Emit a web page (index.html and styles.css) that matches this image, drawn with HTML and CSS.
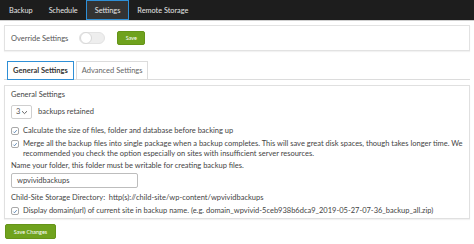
FILE: index.html
```html
<!DOCTYPE html>
<html>
<head>
<meta charset="utf-8">
<link rel="stylesheet" href="styles.css">
</head>
<body>
<nav class="topnav">
  <span class="nav-item">Backup</span>
  <span class="nav-item">Schedule</span>
  <span class="nav-item active">Settings</span>
  <span class="nav-item">Remote Storage</span>
</nav>
<div class="override">
  <span class="label">Override Settings</span>
  <span class="toggle"><span class="knob"></span></span>
  <button class="btn small">Save</button>
</div>
<div class="tabs">
  <span class="tab active">General Settings</span>
  <span class="tab">Advanced Settings</span>
</div>
<div class="panel">
  <div class="heading">General Settings</div>
  <div class="row retain">
    <span class="select">3 <svg width="7" height="5" viewBox="0 0 7 5"><path d="M1 1.2 L3.5 3.6 L6 1.2" fill="none" stroke="#555" stroke-width="0.9"/></svg></span>
    <span>backups retained</span>
  </div>
  <div class="row check"><span class="cb"><svg viewBox="0 0 8 8" width="8" height="8"><path d="M1.8 4.2 L3.3 5.7 L6.3 2.2" fill="none" stroke="#3a6ea5" stroke-width="1"/></svg></span><span>Calculate the size of files, folder and database before backing up</span></div>
  <div class="row check multi"><span class="cb"><svg viewBox="0 0 8 8" width="8" height="8"><path d="M1.8 4.2 L3.3 5.7 L6.3 2.2" fill="none" stroke="#3a6ea5" stroke-width="1"/></svg></span><span>Merge all the backup files into single package when a backup completes. This will save great disk spaces, though takes longer time. We recommended you check the option especially on sites with insufficient server resources.</span></div>
  <div class="row name">Name your folder, this folder must be writable for creating backup files.</div>
  <div class="input">wpvividbackups</div>
  <div class="row">Child-Site Storage Directory:&nbsp; http(s)://child-site/wp-content/wpvividbackups</div>
  <div class="row check last"><span class="cb"><svg viewBox="0 0 8 8" width="8" height="8"><path d="M1.8 4.2 L3.3 5.7 L6.3 2.2" fill="none" stroke="#3a6ea5" stroke-width="1"/></svg></span><span>Display domain(url) of current site in backup name. (e.g. domain_wpvivid-5ceb938b6dca9_2019-05-27-07-36_backup_all.zip)</span></div>
</div>
<button class="btn big">Save Changes</button>
</body>
</html>
```

FILE: styles.css
```css
html, body {
  margin: 0;
  padding: 0;
  background: #ffffff;
  width: 474px;
  height: 244px;
  overflow: hidden;
  font-family: Lato, "Open Sans", sans-serif;
  color: #3c3c3c;
  font-size: 7.5px;
}
.topnav {
  display: flex;
  align-items: stretch;
  background: #1d1d1d;
  height: 20px;
  padding-left: 1px;
  border-bottom: 1px solid #cfcfcf;
}
.nav-item {
  display: flex;
  align-items: center;
  padding: 0 8px;
  color: #e6e6e6;
  font-size: 7.3px;
}
.nav-item.active {
  background: #333;
  border: 1.5px solid #2e8fd6;
  box-sizing: border-box;
  padding: 0 8px;
}
.override {
  margin: 4px 4px 0 4px;
  height: 24px;
  border: 1px solid #e2e2e2;
  box-shadow: 0 1px 1px rgba(0,0,0,0.05);
  display: flex;
  align-items: center;
  padding-left: 6px;
}
.label { color: #555; font-size: 7.5px; }
.toggle {
  margin-left: 11px;
  width: 24px;
  height: 10px;
  border-radius: 6px;
  background: #eeeeee;
  border: 1px solid #e3e3e3;
  position: relative;
}
.knob {
  position: absolute;
  left: 0;
  top: -1px;
  width: 10px;
  height: 10px;
  border-radius: 50%;
  background: #fff;
  border: 1px solid #d8d8d8;
}
.btn {
  background: #6fa21d;
  border: 1px solid #659418;
  color: #fff;
  font-family: Lato, sans-serif;
  border-radius: 2px;
  padding: 0;
}
.btn.small {
  margin-left: 12px;
  width: 28px;
  height: 14px;
  font-size: 5.5px;
}
.tabs {
  display: flex;
  align-items: flex-end;
  margin: 9px 4px 0 4px;
  padding-left: 3px;
  border-bottom: 1px solid #dcdcdc;
  height: 19px;
}
.tab {
  display: flex;
  align-items: center;
  height: 17px;
  padding: 0 5px;
  border: 1px solid #dcdcdc;
  border-bottom: none;
  color: #666;
  margin-right: 2px;
  font-size: 7.5px;
}
.tab.active {
  height: 19px;
  border: 1.5px solid #2e8fd6;
  color: #333;
  font-weight: bold;
  padding: 0 5px;
  box-sizing: border-box;
  margin-bottom: -1px;
}
.panel {
  margin: 5px 4px 0 4px;
  border: 1px solid #e0e0e0;
  box-shadow: 0 1px 1px rgba(0,0,0,0.05);
  padding: 4px 6px 5px 6px;
  height: 134px;
  box-sizing: border-box;
}
.heading {
  color: #444;
  font-size: 7.5px;
  margin-bottom: 6px;
}
.row {
  display: flex;
  align-items: flex-start;
  line-height: 10px;
  margin-bottom: 3px;
  color: #444;
}
.retain { align-items: center; margin-bottom: 7px; }
.multi { margin-bottom: 2px; }
.name { margin-bottom: 2px; }
.select {
  display: inline-flex;
  align-items: center;
  justify-content: space-between;
  width: 21px;
  height: 14px;
  box-sizing: border-box;
  border: 1px solid #cfcfcf;
  border-radius: 2px;
  padding: 0 3px 0 4px;
  margin-right: 6px;
  color: #555;
}
.cb {
  flex: none;
  width: 8px;
  height: 8px;
  border: 1px solid #a9a9a9;
  border-radius: 2px;
  box-sizing: border-box;
  margin: 1px 4px 0 0;
  display: flex;
  align-items: center;
  justify-content: center;
}
.cb svg { width: 7px; height: 7px; }
.input {
  width: 127px;
  height: 15px;
  box-sizing: border-box;
  border: 1px solid #bdbdbd;
  border-radius: 2px;
  padding-left: 5px;
  display: flex;
  align-items: center;
  margin-bottom: 5px;
  color: #444;
}
.btn.big {
  margin: 5px 0 0 5px;
  width: 51px;
  height: 15px;
  font-size: 5.5px;
  display: block;
}
```
